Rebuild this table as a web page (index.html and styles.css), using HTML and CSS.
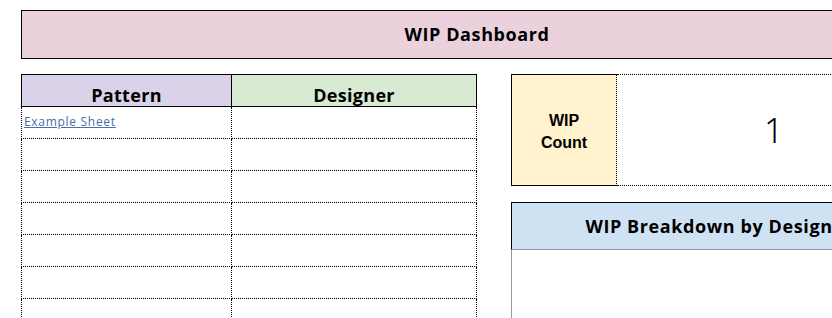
FILE: index.html
```html
<!DOCTYPE html>
<html>
<head>
<meta charset="utf-8">
<link rel="stylesheet" href="styles.css">
</head>
<body>
<div class="page">
  <div class="title">WIP Dashboard</div>
  <div class="main">
    <table class="wip-table">
      <thead>
        <tr>
          <th class="col-pattern">Pattern</th>
          <th class="col-designer">Designer</th>
        </tr>
      </thead>
      <tbody>
        <tr><td><a class="link" href="#">Example Sheet</a></td><td></td></tr>
        <tr><td></td><td></td></tr>
        <tr><td></td><td></td></tr>
        <tr><td></td><td></td></tr>
        <tr><td></td><td></td></tr>
        <tr><td></td><td></td></tr>
        <tr><td></td><td></td></tr>
      </tbody>
    </table>
    <div class="side">
      <div class="count">
        <div class="count-label">WIP<br>Count</div>
        <div class="count-value">1</div>
      </div>
      <div class="breakdown">
        <div class="breakdown-head">WIP Breakdown by Designer</div>
        <div class="breakdown-body"></div>
      </div>
    </div>
  </div>
</div>
</body>
</html>
```

FILE: styles.css
```css
html, body {
  margin: 0;
  padding: 0;
  background: #fff;
  overflow: hidden;
  width: 832px;
  height: 318px;
}
.page {
  padding: 10px 0 0 21px;
  width: 1000px;
  font-family: "Open Sans", "Noto Sans", sans-serif;
  color: #000;
}
.title {
  box-sizing: border-box;
  width: 912px;
  height: 49px;
  border: 1px solid #000;
  background: #ead1dc;
  display: flex;
  align-items: center;
  justify-content: center;
  font-weight: 700;
  font-size: 18px;
  letter-spacing: 0.6px;
  padding-bottom: 1px;
}
.main {
  display: flex;
  gap: 34px;
  margin-top: 15px;
  align-items: flex-start;
}
.wip-table {
  border-collapse: collapse;
  table-layout: fixed;
  width: 456px;
}
.wip-table th {
  height: 31px;
  padding: 0;
  border: 1px solid #000;
  font-weight: 700;
  font-size: 18px;
  letter-spacing: 0.3px;
  vertical-align: bottom;
  line-height: 22px;
}
.col-pattern { width: 209px; background: #d9d2e9; }
.col-designer { background: #d9ead3; }
.wip-table td {
  height: 31px;
  padding: 0 2px;
  border: 1px dotted #000;
  vertical-align: top;
}
.link {
  font-size: 12px;
  letter-spacing: 0.7px;
  color: #4a6ea8;
  text-decoration: underline;
  line-height: 16px;
  display: block;
  padding-top: 7px;
}
.side {
  display: flex;
  flex-direction: column;
  gap: 16px;
}
.count {
  display: flex;
  width: 400px;
  height: 112px;
  box-sizing: border-box;
}
.count-label {
  box-sizing: border-box;
  width: 106px;
  border: 1px solid #000;
  border-right: 1px dotted #000;
  background: #fff2cc;
  display: flex;
  align-items: center;
  justify-content: center;
  text-align: center;
  padding-top: 3px;
  font-family: "Liberation Sans", Arial, sans-serif;
  font-weight: 700;
  font-size: 16px;
  line-height: 22px;
}
.count-value {
  flex: 1;
  border-top: 1px dotted #000;
  border-bottom: 1px dotted #000;
  display: flex;
  align-items: center;
  padding-left: 147px;
  font-family: "Noto Sans", sans-serif;
  font-weight: 300;
  font-size: 34px;
}
.breakdown {
  width: 416px;
}
.breakdown-head {
  box-sizing: border-box;
  height: 48px;
  border: 1px solid #000;
  border-bottom: 1px solid #8a96a3;
  background: #cfe2f3;
  display: flex;
  align-items: center;
  justify-content: center;
  font-weight: 700;
  font-size: 18px;
  letter-spacing: 0.6px;
}
.breakdown-body {
  height: 80px;
  border-left: 1px solid #999;
}
```
